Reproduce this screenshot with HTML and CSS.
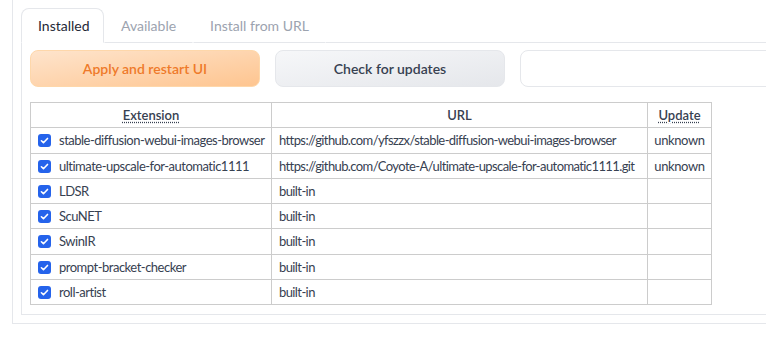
FILE: index.html
```
<!DOCTYPE html>
<html>
<head>
  <meta charset="utf-8" />
  <title>Extensions</title>
  <link rel="stylesheet" href="styles.css">
</head>
<body>
  <div class="outer">
    <div class="tabs">
      <div class="tab-nav">
        <button class="tab selected">Installed</button>
        <button class="tab">Available</button>
        <button class="tab">Install from URL</button>
        <div class="tab-fill"></div>
      </div>

      <div class="tab-panel">
        <div class="button-row">
          <button class="btn btn-primary">Apply and restart UI</button>
          <button class="btn btn-secondary">Check for updates</button>
          <div class="text-box"></div>
        </div>

        <table class="ext-table">
          <thead>
            <tr>
              <th class="col-name"><abbr title="Use checkbox to enable the extension">Extension</abbr></th>
              <th class="col-url">URL</th>
              <th class="col-update"><abbr title="Use 'Check for updates' button">Update</abbr></th>
            </tr>
          </thead>
          <tbody>
            <tr>
              <td><span class="check"><svg viewBox="0 0 16 16"><path d="M4.2 8.3l2.5 2.4 5-5.2" /></svg></span>stable-diffusion-webui-images-browser</td>
              <td class="url">https://github.com/yfszzx/stable-diffusion-webui-images-browser</td>
              <td class="upd">unknown</td>
            </tr>
            <tr>
              <td><span class="check"><svg viewBox="0 0 16 16"><path d="M4.2 8.3l2.5 2.4 5-5.2" /></svg></span>ultimate-upscale-for-automatic1111</td>
              <td class="url">https://github.com/Coyote-A/ultimate-upscale-for-automatic1111.git</td>
              <td class="upd">unknown</td>
            </tr>
            <tr>
              <td><span class="check"><svg viewBox="0 0 16 16"><path d="M4.2 8.3l2.5 2.4 5-5.2" /></svg></span>LDSR</td>
              <td class="url">built-in</td>
              <td class="upd"></td>
            </tr>
            <tr>
              <td><span class="check"><svg viewBox="0 0 16 16"><path d="M4.2 8.3l2.5 2.4 5-5.2" /></svg></span>ScuNET</td>
              <td class="url">built-in</td>
              <td class="upd"></td>
            </tr>
            <tr>
              <td><span class="check"><svg viewBox="0 0 16 16"><path d="M4.2 8.3l2.5 2.4 5-5.2" /></svg></span>SwinIR</td>
              <td class="url">built-in</td>
              <td class="upd"></td>
            </tr>
            <tr>
              <td><span class="check"><svg viewBox="0 0 16 16"><path d="M4.2 8.3l2.5 2.4 5-5.2" /></svg></span>prompt-bracket-checker</td>
              <td class="url">built-in</td>
              <td class="upd"></td>
            </tr>
            <tr>
              <td><span class="check"><svg viewBox="0 0 16 16"><path d="M4.2 8.3l2.5 2.4 5-5.2" /></svg></span>roll-artist</td>
              <td class="url">built-in</td>
              <td class="upd"></td>
            </tr>
          </tbody>
        </table>
      </div>
    </div>
  </div>
</body>
</html>
```
FILE: styles.css
```
* {
  margin: 0;
  padding: 0;
  box-sizing: border-box;
}

html, body {
  overflow: hidden;
}

body {
  font-family: Lato, "Noto Sans", sans-serif;
  background: white;
  color: #374151;
  width: 766px;
  height: 342px;
}

.outer {
  margin-left: 12px;
  width: 800px;
  padding: 8px 0 8px 8px;
  border-left: 1px solid #e5e7eb;
  border-bottom: 1px solid #e5e7eb;
}

.tab-nav {
  display: flex;
  height: 35px;
}

.tab {
  background: none;
  border: 1px solid transparent;
  border-bottom: 1px solid #e5e7eb;
  font-family: inherit;
  font-size: 14px;
  color: #9ca3af;
  padding: 0 16px;
  height: 35px;
  cursor: pointer;
}

.tab.selected {
  color: #1f2937;
  border-color: #e5e7eb;
  border-bottom-color: white;
  border-radius: 8px 8px 0 0;
  width: 83px;
}

.tab-fill {
  flex: 1;
  border-bottom: 1px solid #e5e7eb;
}

.tab-panel {
  border: 1px solid #e5e7eb;
  border-top: none;
  padding: 7px 0 9px 8px;
}

.button-row {
  display: flex;
  gap: 15px;
  margin-bottom: 15px;
}

.btn {
  width: 230px;
  height: 37px;
  border-radius: 8px;
  font-family: inherit;
  font-size: 14px;
  font-weight: 600;
  cursor: pointer;
}

.btn-primary {
  background: linear-gradient(to bottom right, #fee4cc, #fec590);
  border: 1px solid #fed7aa;
  color: #ee7a2a;
}

.btn-secondary {
  background: linear-gradient(to bottom right, #f6f7f9, #e5e7eb);
  border: 1px solid #e5e7eb;
  color: #374151;
}

.text-box {
  flex: 1;
  height: 37px;
  border: 1px solid #e5e7eb;
  border-radius: 8px;
  background: white;
}

.ext-table {
  border-collapse: collapse;
  width: 681px;
  table-layout: fixed;
  font-size: 13px;
}

.ext-table th, .ext-table td {
  border: 1px solid #cccccc;
  height: 25.25px;
  padding: 0 7px;
  white-space: nowrap;
  overflow: hidden;
}

.ext-table th {
  font-weight: 600;
  color: #374151;
  text-align: center;
}

.col-name { width: 241px; }
.col-url { width: 376px; }
.col-update { width: 64px; }

abbr {
  text-decoration: underline dotted;
  text-underline-offset: 2px;
}

.ext-table td {
  color: #374151;
  letter-spacing: -0.5px;
}

.ext-table td.url {
  letter-spacing: -0.6px;
}

.ext-table td.upd {
  text-align: center;
  padding: 0 4px;
  letter-spacing: -0.4px;
}

.check {
  display: inline-block;
  width: 13px;
  height: 13px;
  border-radius: 3px;
  background: #2563eb;
  vertical-align: -2px;
  margin-right: 8px;
  letter-spacing: 0;
}

.check svg {
  display: block;
  width: 13px;
  height: 13px;
  fill: none;
  stroke: white;
  stroke-width: 2;
  stroke-linecap: round;
  stroke-linejoin: round;
}
```
